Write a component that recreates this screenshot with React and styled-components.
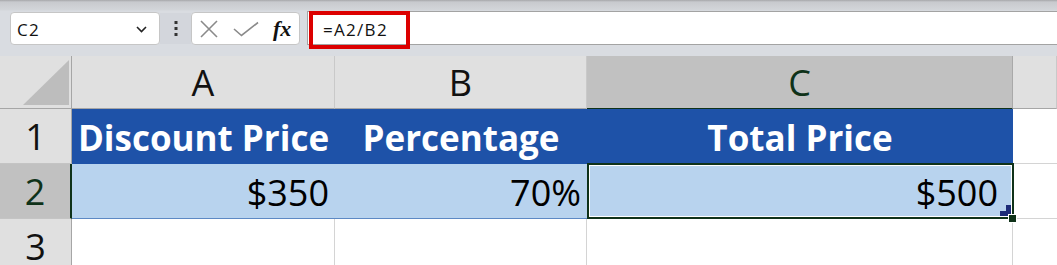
import React from "react";
import styled, { createGlobalStyle } from "styled-components";

const GlobalStyle = createGlobalStyle`
  html, body {
    margin: 0;
    padding: 0;
    background: #d9dce1;
  }
  body {
    font-family: "Open Sans", "Liberation Sans", sans-serif;
    overflow: hidden;
  }
`;

const DARK = "#0f3219";

const Toolbar = styled.div`
  display: flex;
  align-items: flex-start;
  height: 56px;
  box-sizing: border-box;
  padding: 11px 0 0 10px;
  background: linear-gradient(#a6a7a9 0px, #c8cace 2px, #d3d6da 10px, #d9dce1 11px);
`;

const NameBox = styled.div`
  width: 150px;
  height: 33px;
  margin-top: 1px;
  box-sizing: border-box;
  display: flex;
  align-items: center;
  justify-content: space-between;
  padding: 2px 12px 0 6px;
  background: #fff;
  border: 1px solid #c6c6c6;
  border-radius: 4px;
  font-size: 17px;
  letter-spacing: 1.2px;
  line-height: 1;
  color: #111;
`;

const DotsButton = styled.div`
  width: 31px;
  height: 31px;
  margin-top: 2px;
  display: flex;
  align-items: center;
  justify-content: center;
  background: #d3d6dc;
`;

const FxBox = styled.div`
  width: 109px;
  height: 33px;
  margin-top: 1px;
  box-sizing: border-box;
  display: flex;
  align-items: center;
  padding-left: 8px;
  background: #fff;
  border: 1px solid #c6c6c6;
  border-radius: 4px;
`;

const FxLabel = styled.span`
  margin-left: 14px;
  font-family: "Liberation Serif", "DejaVu Serif", serif;
  font-style: italic;
  font-weight: bold;
  font-size: 22px;
  line-height: 1;
  color: #111;
`;

const FormulaInput = styled.div`
  flex: 1;
  height: 34px;
  margin-left: 7px;
  box-sizing: border-box;
  display: flex;
  align-items: flex-start;
  background: #fff;
  border: 1px solid #a3a3a3;
  border-right: none;
`;

const Highlight = styled.div`
  width: 101px;
  height: 38px;
  margin: -1px 0 0 1px;
  box-sizing: border-box;
  padding: 6px 0 0 10px;
  border: 4px solid #dc0000;
  font-size: 17px;
  letter-spacing: 1.3px;
  line-height: 1;
  color: #111;
`;

const Sheet = styled.div`
  display: grid;
  grid-template-columns: 72px 263px 252px 426px 1fr;
  grid-template-rows: 53px 55px 55px 1fr;
  height: 209px;
  background: #fff;
`;

const Corner = styled.div`
  display: flex;
  align-items: flex-end;
  justify-content: flex-end;
  padding: 0 2px 3px 0;
  background: #e0e0e0;
  border-right: 1px solid #a6a6a6;
  border-bottom: 1px solid #a6a6a6;
  &::after {
    content: "";
    width: 46px;
    height: 45px;
    background: #bdbdbd;
    clip-path: polygon(100% 0, 100% 100%, 0 100%);
  }
`;

const ColHeader = styled.div`
  box-sizing: border-box;
  padding-top: 9px;
  text-align: center;
  font-size: 36px;
  line-height: 1;
  background: ${(p) => (p.$selected ? "#c1c1c1" : "#e0e0e0")};
  color: ${(p) => (p.$selected ? DARK : "#111")};
  border-right: 1px solid ${(p) => (p.$selected ? "#a9a9a9" : "#c9c9c9")};
  border-bottom: ${(p) => (p.$selected ? `2px solid ${DARK}` : "1px solid #a6a6a6")};
  margin-bottom: ${(p) => (p.$selected ? "-1px" : "0")};
`;

const RowHeader = styled.div`
  box-sizing: border-box;
  padding-top: 10px;
  text-align: center;
  font-size: 36px;
  line-height: 1;
  background: ${(p) => (p.$selected ? "#c1c1c1" : "#e0e0e0")};
  color: ${(p) => (p.$selected ? DARK : "#111")};
  border-right: ${(p) => (p.$selected ? `2px solid ${DARK}` : "1px solid #a6a6a6")};
  border-bottom: 1px solid #c4c4c4;
`;

const TitleCell = styled.div`
  box-sizing: border-box;
  padding-top: 11px;
  text-align: center;
  font-size: 35px;
  font-weight: bold;
  line-height: 1;
  color: #fff;
  background: #1e52a8;
  border-bottom: 1px solid #1e52a8;
`;

const ValueCell = styled.div`
  position: relative;
  box-sizing: border-box;
  padding: 11px ${(p) => p.$pr || 6}px 0 0;
  text-align: right;
  font-size: 36px;
  line-height: 1;
  color: #000;
  background: #b8d3ee;
  border-bottom: 1px solid #5d89c4;
`;

const Selection = styled.div`
  position: absolute;
  top: -1px;
  left: 0;
  right: -1px;
  bottom: -1px;
  border: 2px solid ${DARK};
  box-shadow: inset 0 0 0 1px #ffffff;
  pointer-events: none;
  z-index: 2;
`;

const Marker = styled.svg`
  position: absolute;
  right: 2px;
  bottom: 2px;
  z-index: 3;
`;

const FillHandle = styled.div`
  position: absolute;
  right: -3px;
  bottom: -4px;
  width: 7px;
  height: 7px;
  background: ${DARK};
  outline: 1px solid #fff;
  z-index: 3;
`;

const EmptyCell = styled.div`
  box-sizing: border-box;
  background: #fff;
  border-right: ${(p) => (p.$noRight ? "none" : "1px solid #d4d4d4")};
  border-bottom: 1px solid #d4d4d4;
`;

const CloseIcon = () => (
  <svg width="18" height="18" viewBox="0 0 18 18">
    <path d="M1 1 L17 17 M17 1 L1 17" stroke="#8a8a8a" strokeWidth="1.6" fill="none" />
  </svg>
);

const CheckIcon = () => (
  <svg width="26" height="16" viewBox="0 0 26 16" style={{ marginLeft: 15 }}>
    <path d="M1 8 L8.5 14.5 L25 1.5" stroke="#8a8a8a" strokeWidth="1.6" fill="none" />
  </svg>
);

const Chevron = () => (
  <svg width="11" height="7" viewBox="0 0 11 7">
    <path d="M1 1 L5.5 5.5 L10 1" stroke="#222" strokeWidth="1.6" fill="none" />
  </svg>
);

const Dots = () => (
  <svg width="4" height="15" viewBox="0 0 4 15">
    <rect x="0.5" y="0" width="3" height="3" fill="#333" />
    <rect x="0.5" y="6" width="3" height="3" fill="#333" />
    <rect x="0.5" y="12" width="3" height="3" fill="#333" />
  </svg>
);

const columns = ["A", "B", "C"];

export default function App() {
  return (
    <>
      <GlobalStyle />
      <Toolbar>
        <NameBox>
          <span>C2</span>
          <Chevron />
        </NameBox>
        <DotsButton>
          <Dots />
        </DotsButton>
        <FxBox>
          <CloseIcon />
          <CheckIcon />
          <FxLabel>fx</FxLabel>
        </FxBox>
        <FormulaInput>
          <Highlight>=A2/B2</Highlight>
        </FormulaInput>
      </Toolbar>
      <Sheet>
        <Corner />
        {columns.map((c) => (
          <ColHeader key={c} $selected={c === "C"}>
            {c}
          </ColHeader>
        ))}
        <ColHeader />

        <RowHeader>1</RowHeader>
        <TitleCell>Discount Price</TitleCell>
        <TitleCell>Percentage</TitleCell>
        <TitleCell>Total Price</TitleCell>
        <EmptyCell $noRight />

        <RowHeader $selected>2</RowHeader>
        <ValueCell>$350</ValueCell>
        <ValueCell>70%</ValueCell>
        <ValueCell $pr={15}>
          $500
          <Selection />
          <Marker width="11" height="11" viewBox="0 0 11 11">
            <path d="M6 0 H11 V11 H0 V6 H6 Z" fill="#1c2a78" />
          </Marker>
          <FillHandle />
        </ValueCell>
        <EmptyCell $noRight />

        <RowHeader>3</RowHeader>
        <EmptyCell />
        <EmptyCell />
        <EmptyCell />
        <EmptyCell $noRight />
      </Sheet>
    </>
  );
}
